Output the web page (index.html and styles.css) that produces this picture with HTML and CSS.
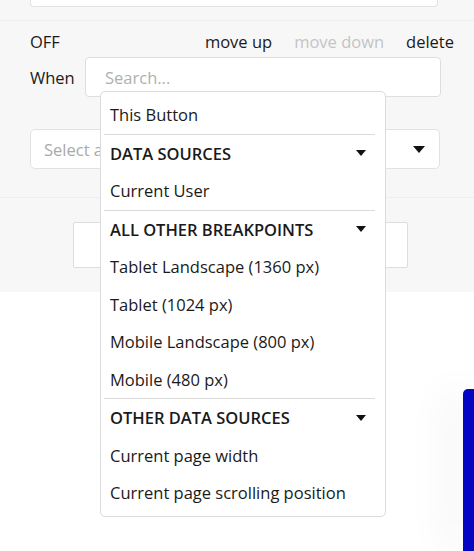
FILE: index.html
```html
<!DOCTYPE html>
<html>
<head>
<meta charset="utf-8">
<link rel="stylesheet" href="styles.css">
</head>
<body>
<div class="panel">
  <div class="sec-top">
    <div class="top-input"></div>
  </div>
  <div class="sec-cond">
    <div class="actions">
      <span class="state">OFF</span>
      <span class="act">move up</span>
      <span class="act disabled">move down</span>
      <span class="act">delete</span>
    </div>
    <div class="when-row">
      <span class="when">When</span>
      <div class="search">Search...</div>
    </div>
    <div class="select">
      <span class="select-ph">Select an action...</span>
      <span class="caret big"></span>
    </div>
  </div>
  <div class="sec-btn">
    <div class="btn-box"></div>
  </div>
</div>

<div class="dropdown">
  <div class="item">This Button</div>
  <div class="group">
    <div class="head"><span>DATA SOURCES</span><span class="caret"></span></div>
    <div class="item">Current User</div>
  </div>
  <div class="group">
    <div class="head"><span>ALL OTHER BREAKPOINTS</span><span class="caret"></span></div>
    <div class="item">Tablet Landscape (1360 px)</div>
    <div class="item">Tablet (1024 px)</div>
    <div class="item">Mobile Landscape (800 px)</div>
    <div class="item">Mobile (480 px)</div>
  </div>
  <div class="group">
    <div class="head"><span>OTHER DATA SOURCES</span><span class="caret"></span></div>
    <div class="item">Current page width</div>
    <div class="item">Current page scrolling position</div>
  </div>
</div>

<div class="side-panel"></div>
</body>
</html>
```
FILE: styles.css
```css
html, body {
  margin: 0;
  padding: 0;
  background: #ffffff;
  font-family: "Open Sans", "Liberation Sans", sans-serif;
  color: #1a1a1a;
  overflow: hidden;
}
body {
  width: 474px;
  height: 551px;
  position: relative;
}
.panel {
  background: #f7f7f7;
}
.sec-top {
  height: 20px;
  padding: 0 36px 0 30px;
}
.top-input {
  height: 6px;
  background: #fff;
  border: 1px solid #e2e2e2;
  border-top: none;
  border-radius: 0 0 4px 4px;
}
.sec-cond {
  border-top: 1px solid #eeeeee;
  padding: 0 20px 0 30px;
  height: 176px;
  font-size: 16.5px;
}
.actions {
  display: flex;
  align-items: flex-start;
  height: 36px;
  padding-top: 9px;
  box-sizing: border-box;
  gap: 22px;
}
.state {
  margin-right: auto;
}
.act.disabled {
  color: #c4c4c4;
}
.when-row {
  display: flex;
  align-items: center;
  padding-right: 13px;
}
.when {
  width: 55px;
  flex: none;
}
.search {
  flex: 1;
  height: 38px;
  background: #fff;
  border: 1px solid #dedede;
  border-radius: 4px;
  color: #b0b0b0;
  display: flex;
  align-items: center;
  padding-left: 19px;
}
.select {
  margin-top: 32px;
  margin-right: 14px;
  height: 38px;
  background: #fff;
  border: 1px solid #e2e2e2;
  border-radius: 5px;
  display: flex;
  align-items: center;
  justify-content: space-between;
  padding: 0 14px 0 13px;
  color: #a9a9a9;
}
.caret {
  width: 0;
  height: 0;
  border-left: 5px solid transparent;
  border-right: 5px solid transparent;
  border-top: 6px solid #111;
}
.caret.big {
  border-left-width: 6px;
  border-right-width: 6px;
  border-top-width: 7px;
}
.sec-btn {
  border-top: 1px solid #eeeeee;
  height: 95px;
  padding-top: 24px;
  box-sizing: border-box;
}
.btn-box {
  margin-left: 73px;
  width: 333px;
  height: 44px;
  background: #fff;
  border: 1px solid #dddddd;
  border-radius: 2px;
}
.dropdown {
  position: absolute;
  left: 100px;
  top: 91px;
  width: 284px;
  background: #fff;
  border: 1px solid #dcdcdc;
  border-radius: 5px;
  padding: 4px 0 4px;
  font-size: 16.5px;
}
.item {
  height: 37.5px;
  display: flex;
  align-items: center;
  padding-left: 9px;
}
.group {
  border-top: 1px solid #dadada;
  margin: 0 10px 0 3px;
}
.group .item, .group .head {
  margin-left: -3px;
  margin-right: -10px;
}
.head {
  height: 37.5px;
  display: flex;
  align-items: center;
  justify-content: space-between;
  padding: 0 19px 0 9px;
  font-weight: 600;
}
.side-panel {
  position: absolute;
  left: 463px;
  top: 389px;
  width: 11px;
  height: 162px;
  background: #0505c4;
  border-radius: 5px 0 0 0;
  box-shadow: -12px 0 40px rgba(0, 0, 0, 0.10);
}
```
